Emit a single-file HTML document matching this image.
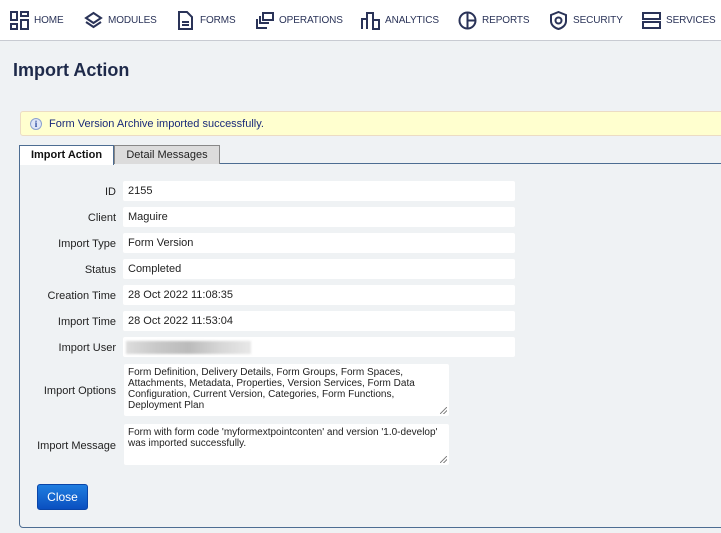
<!DOCTYPE html>
<html><head><meta charset="utf-8"><style>
*{box-sizing:border-box;margin:0;padding:0}
body{width:721px;height:533px;overflow:hidden;background:#eff2f4;font-family:"Liberation Sans",Arial,sans-serif;position:relative;color:#222}
.nav{position:absolute;left:0;top:0;width:721px;height:41px;background:#fff;border-bottom:1px solid #c8cbd2}
.ni{position:absolute;top:0;height:41px;display:flex;align-items:center;font-size:10px;color:#2a3358;letter-spacing:-0.1px}
.ni svg{width:19px;height:19px;margin-right:5px}
h1{position:absolute;left:13px;top:60px;font-size:18px;font-weight:bold;color:#1e2a4a}
.msg{position:absolute;left:20px;top:111px;width:710px;height:25px;background:#ffffcf;border:1px solid #ecdcc4;border-radius:3px;font-size:11px;color:#1a2a7a;padding:6px 0 0 28px}
.msg .i{position:absolute;left:9px;top:6px;width:12px;height:12px;border-radius:50%;background:#dfe6f6;border:1px solid #8aa0d0;font-size:9px;line-height:10px;text-align:center;color:#2a4aa0;font-weight:bold;font-family:"Liberation Serif",serif}
.tab{position:absolute;top:145px;height:19px;font-size:11px;padding:3px 0 0;text-align:center}
.panel{position:absolute;left:19px;top:163px;width:720px;height:365px;border:1px solid #4d6d92;border-radius:0 0 0 4px}
.lbl{position:absolute;right:605px;font-size:11px;color:#222;text-align:right}
.fld{position:absolute;left:123px;width:392px;height:20px;background:#fff;font-size:11px;padding:4px 0 0 5px;border-radius:2px}
.ta{position:absolute;left:124px;width:325px;background:#fff;font-size:10px;line-height:11px;padding:3px 5px 3px 4px;border-radius:2px;color:#222}
.grip{position:absolute;right:2px;bottom:2px;width:7px;height:7px;background:linear-gradient(135deg,transparent 45%,#888 45%,#888 55%,transparent 55%,transparent 70%,#888 70%,#888 80%,transparent 80%)}
.btn{position:absolute;left:37px;top:484px;width:51px;height:26px;border-radius:3px;background:linear-gradient(#1f7ee0,#0a4fc0);border:1px solid #0a45a8;color:#fff;font-size:12px;text-align:center;line-height:24px}
</style></head><body>
<div class="nav">
<div class="ni" style="left:10px"><svg viewBox="0 0 19 19" fill="none" stroke="#2a3358" stroke-width="2"><rect x="1" y="1" width="6" height="8"/><rect x="11" y="1" width="7" height="4"/><rect x="1" y="13" width="6" height="5"/><rect x="11" y="9" width="7" height="9"/></svg>HOME</div>
<div class="ni" style="left:84px"><svg viewBox="0 0 19 19" fill="none" stroke="#2a3358" stroke-width="2"><path d="M9.5 2 17 7 9.5 12 2 7Z"/><path d="M2 11l7.5 5 7.5-5"/></svg>MODULES</div>
<div class="ni" style="left:176px"><svg viewBox="0 0 19 19" fill="none" stroke="#2a3358" stroke-width="2"><path d="M3 1h8l5 5v12H3Z"/><path d="M6 11h7M6 14h7"/></svg>FORMS</div>
<div class="ni" style="left:255px"><svg viewBox="0 0 19 19" fill="none" stroke="#2a3358" stroke-width="2"><rect x="8" y="2" width="10" height="7"/><path d="M5 5v7h9M2 8v9h10"/></svg>OPERATIONS</div>
<div class="ni" style="left:361px"><svg viewBox="0 0 19 19" fill="none" stroke="#2a3358" stroke-width="2"><path d="M1 18V8h5v10M6 18V2h6v16M12 18V9h6v9Z"/></svg>ANALYTICS</div>
<div class="ni" style="left:458px"><svg viewBox="0 0 19 19" fill="none" stroke="#2a3358" stroke-width="2"><circle cx="9.5" cy="9.5" r="8"/><path d="M9.5 1.5v16M9.5 9.5h8"/></svg>REPORTS</div>
<div class="ni" style="left:549px"><svg viewBox="0 0 19 19" fill="none" stroke="#2a3358" stroke-width="2"><path d="M9.5 1 17 4v6c0 4-3.5 7-7.5 8C5.5 17 2 14 2 10V4Z"/><circle cx="9.5" cy="9.5" r="3"/></svg>SECURITY</div>
<div class="ni" style="left:642px"><svg viewBox="0 0 19 19" fill="none" stroke="#2a3358" stroke-width="2"><rect x="1" y="2" width="17" height="6"/><rect x="1" y="11" width="17" height="6"/></svg>SERVICES</div>
</div>
<h1>Import Action</h1>
<div class="msg"><span class="i">i</span>Form Version Archive imported successfully.</div>
<div class="panel"></div>
<div class="tab" style="left:19px;width:95px;background:#fff;border:1px solid #4d6d92;border-bottom:none;height:20px;font-weight:bold;color:#111">Import Action</div>
<div class="tab" style="left:114px;width:106px;background:#dcdcdc;border:1px solid #888;border-bottom:none;color:#222">Detail Messages</div>
<div class="lbl" style="top:186px">ID</div><div class="fld" style="top:181px">2155</div>
<div class="lbl" style="top:212px">Client</div><div class="fld" style="top:207px">Maguire</div>
<div class="lbl" style="top:238px">Import Type</div><div class="fld" style="top:233px">Form Version</div>
<div class="lbl" style="top:264px">Status</div><div class="fld" style="top:259px">Completed</div>
<div class="lbl" style="top:290px">Creation Time</div><div class="fld" style="top:285px">28 Oct 2022 11:08:35</div>
<div class="lbl" style="top:316px">Import Time</div><div class="fld" style="top:311px">28 Oct 2022 11:53:04</div>
<div class="lbl" style="top:342px">Import User</div><div class="fld" style="top:337px"><div style="width:125px;height:13px;margin:0 0 0 -2px;background:linear-gradient(90deg,#ddd,#c8c8c8,#bbb,#d6d6d6,#e8e8e8);filter:blur(1px)"></div></div>
<div class="lbl" style="top:385px">Import Options</div>
<div class="ta" style="top:364px;height:52px">Form Definition, Delivery Details, Form Groups, Form Spaces, Attachments, Metadata, Properties, Version Services, Form Data Configuration, Current Version, Categories, Form Functions,<br>Deployment Plan<div class="grip"></div></div>
<div class="lbl" style="top:440px">Import Message</div>
<div class="ta" style="top:424px;height:41px">Form with form code 'myformextpointconten' and version '1.0-develop'<br>was imported successfully.<div class="grip"></div></div>
<div class="btn">Close</div>
</body></html>
